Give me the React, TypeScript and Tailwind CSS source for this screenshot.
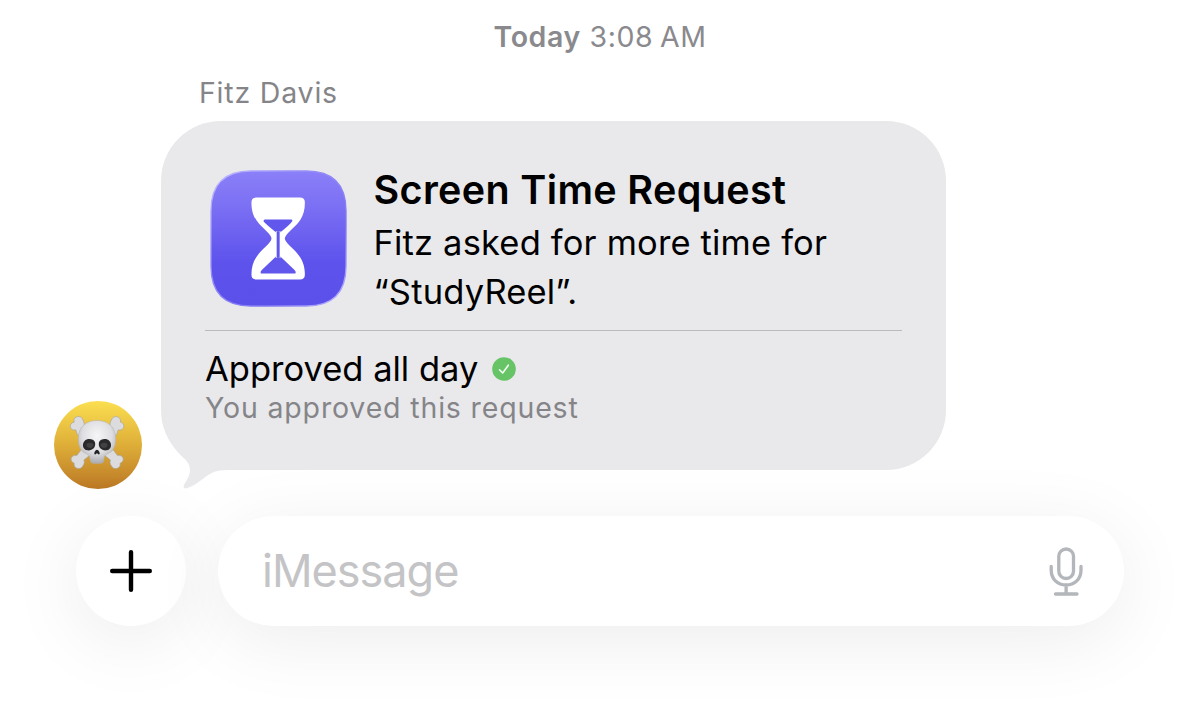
function ScreenTimeIcon() {
  return (
    <svg viewBox="31 29 410 410" className="h-[137px] w-[137px] shrink-0" aria-hidden="true">
      <defs>
        <linearGradient id="tile" x1="0" y1="0" x2="0" y2="1">
          <stop offset="0" stopColor="#8b80f8" />
          <stop offset="0.25" stopColor="#7c70f4" />
          <stop offset="0.68" stopColor="#5d52ec" />
          <stop offset="1" stopColor="#5b50ea" />
        </linearGradient>
        <linearGradient id="rim" x1="0" y1="0" x2="1" y2="1">
          <stop offset="0" stopColor="#c2bcff" />
          <stop offset="0.3" stopColor="#9a92f8" />
          <stop offset="0.7" stopColor="#8279f2" />
          <stop offset="1" stopColor="#bab4ff" />
        </linearGradient>
      </defs>
      <path
        d="M153 32H319C398 32 438 72 438 151V317C438 396 398 436 319 436H153C74 436 34 396 34 317V151C34 72 74 32 153 32Z"
        fill="url(#tile)"
        stroke="url(#rim)"
        strokeWidth="4"
      />
      <path
        d="M170 111H300Q315 111 315 126C315 171 295 188 272 210Q255 226 255 234Q255 242 272 258C295 280 315 300 315 342Q315 357 300 357H170Q155 357 155 342C155 300 175 280 198 258Q215 242 215 234Q215 226 198 210C175 188 155 171 155 126Q155 111 170 111Z"
        fill="#fff"
      />
      <path
        d="M195 177H274Q280 178 276 184Q272 191 240 217V286L284 328Q290 334 286 339H184Q180 334 186 328L230 286V217Q198 191 192 184Q190 178 195 177Z"
        fill="#6257ed"
      />
      <path d="M235 212V292" stroke="#fff" strokeWidth="14" />
      <path d="M235 212V292" stroke="#6257ed" strokeWidth="9" />
    </svg>
  );
}

function Avatar() {
  return (
    <svg viewBox="43 35 262 262" className="h-[88px] w-[88px]" role="img" aria-label="Fitz Davis">
      <defs>
        <linearGradient id="gold" x1="0" y1="0" x2="0" y2="1">
          <stop offset="0" stopColor="#fbdf50" />
          <stop offset="0.5" stopColor="#deae38" />
          <stop offset="1" stopColor="#bb7825" />
        </linearGradient>
        <radialGradient id="skull" cx="0.5" cy="0.36" r="0.66">
          <stop offset="0" stopColor="#f6f6f8" />
          <stop offset="0.6" stopColor="#dedee2" />
          <stop offset="1" stopColor="#a6a6aa" />
        </radialGradient>
      </defs>
      <circle cx="174" cy="166" r="131" fill="url(#gold)" />
      <g fill="#dcdcdf" stroke="#a7a49d" strokeWidth="2" strokeLinejoin="round">
        <path d="M112 134L108 121C88 125 86 100 103 98C98 80 124 75 129 91C134 101 133 104 133 106L150 123L128 145Z" />
        <path d="M230 134L234 121C254 125 256 100 241 98C244 80 220 75 214 91C209 101 210 104 210 106L193 123L215 145Z" />
        <path d="M124 180L111 197C92 194 88 215 103 220C100 237 124 242 129 228C134 222 134 216 132 211L155 192Z" />
        <path d="M219 180L232 197C251 194 255 215 240 220C243 237 219 242 214 228C209 222 209 216 211 211L188 192Z" />
      </g>
      <path
        d="M171 93C137 93 115 114 115 147C115 163 118 174 126 183C132 191 147 193 149 200L151 213Q153 221 162 221H180Q190 221 191 213L193 200C195 193 210 191 216 183C224 174 227 163 227 147C227 114 205 93 171 93Z"
        fill="url(#skull)"
        stroke="#b2afa9"
        strokeWidth="1.5"
      />
      <path
        d="M134 154C142 145 161 147 165 158C169 174 156 184 142 182C129 180 125 164 134 154ZM208 154C200 145 181 147 177 158C173 174 186 184 200 182C213 180 217 164 208 154Z"
        fill="#29292b"
      />
      <path d="M139 165C144 157 158 158 161 166C158 178 142 178 139 165ZM203 165C198 157 184 158 181 166C184 178 200 178 203 165Z" fill="#414144" />
      <path d="M171 180C166 181 162 188 163 193Q167 196 171 190Q175 196 179 193C180 188 176 181 171 180Z" fill="#222" />
      <path d="M162 207V218M171 208V219M180 207V218" stroke="#bbbbbf" strokeWidth="1.500" />
    </svg>
  );
}

export default function App() {
  return (
    <main className="flex h-[702px] w-[1200px] flex-col overflow-hidden bg-white font-['Inter',sans-serif]">
      <p className="mt-[17px] flex justify-center text-[28.5px] leading-10 tracking-[0.6px] whitespace-pre text-[#8a8a8e]">
        <span className="font-semibold">Today</span>
        <span> 3:08</span>
        <span className="-ml-[2px]"> AM</span>
      </p>
      <p className="mt-[15.5px] ml-[199px] text-[28.5px] leading-10 tracking-[0.8px] text-[#858589]">Fitz Davis</p>

      <section className="mt-[8.500px] flex h-[368px] items-start">
        <div className="mt-[280px] ml-[54px] h-[88px] w-[88px]">
          <Avatar />
        </div>
        <article className="relative ml-[19px] h-[349px] w-[785px] rounded-[60px] bg-[#e9e9eb] px-[44px] pt-[49px]">
          <svg viewBox="161 420 70 70" className="absolute top-[299px] left-0 h-[70px] w-[70px]" aria-hidden="true">
            <path
              d="M162 420C165 433 172 447 182 456.500C187.500 461 190 465 190 470C190 475 187.500 479 184.500 484C182.500 487 184 489.500 187.500 488C194 486 200 481 206 476.500C213 471 219 470 231 470L231 420Z"
              fill="#e9e9eb"
            />
          </svg>
          <div className="relative flex h-[161px] items-start border-b border-[#bbbbbf] pl-[5px]">
            <div className="-ml-[0.5px] h-[137px] w-[137px] shrink-0">
              <ScreenTimeIcon />
            </div>
            <div className="ml-[27px] whitespace-nowrap text-black">
              <h1 className="-mt-[5px] text-[39.5px] leading-[50px] font-semibold tracking-[0.35px]">Screen Time Request</h1>
              <p className="mt-[3px] text-[34.5px] leading-[49px] tracking-[0.17px]">
                Fitz asked for more time for
                <br />
                “StudyReel”.
              </p>
            </div>
          </div>
          <div className="relative mt-[17px] flex items-center gap-[14px]">
            <p className="text-[34.5px] leading-[42px] tracking-normal text-black">Approved all day</p>
            <svg viewBox="0 0 24 24" className="h-6 w-6" aria-hidden="true">
              <circle cx="12" cy="12" r="11.800" fill="#66c466" />
              <path d="M7.500 12.800L10.700 16L16.300 8.200" fill="none" stroke="#f3fff3" strokeWidth="1.600" strokeLinecap="round" strokeLinejoin="round" />
            </svg>
          </div>
          <p className="relative text-[28.5px] leading-[36px] tracking-[0.84px] text-[#858589]">You approved this request</p>
        </article>
      </section>

      <section className="mt-[27px] flex pl-[76px]">
        <button className="flex h-[110px] w-[110px] items-center justify-center rounded-full bg-white shadow-[0_14px_76px_rgba(0,0,0,0.08)]" aria-label="Add">
          <svg viewBox="0 0 44 44" className="h-[44px] w-[44px]">
            <path d="M22 3.200V40.800M3.200 22H40.800" stroke="#000" strokeWidth="4.400" strokeLinecap="round" />
          </svg>
        </button>
        <div className="ml-[32px] flex h-[110px] w-[906px] items-center justify-between rounded-full bg-white pr-[39px] pl-[44px] shadow-[0_14px_76px_rgba(0,0,0,0.075)]">
          <span className="text-[45px] leading-[60px] tracking-[-1px] text-[#c4c4c6]">iMessage</span>
          <svg viewBox="0 0 38 50" className="h-[50px] w-[38px]" fill="none" stroke="#b3b6bb" strokeWidth="3.300" strokeLinecap="round" aria-hidden="true">
            <rect x="11.800" y="3" width="14.700" height="29.500" rx="7.350" />
            <path d="M4.200 20.500V24C4.200 33 10.500 39 19.100 39S34 33 34 24V20.500M19.100 39V48M8.500 48H30" />
          </svg>
        </div>
      </section>
    </main>
  );
}
